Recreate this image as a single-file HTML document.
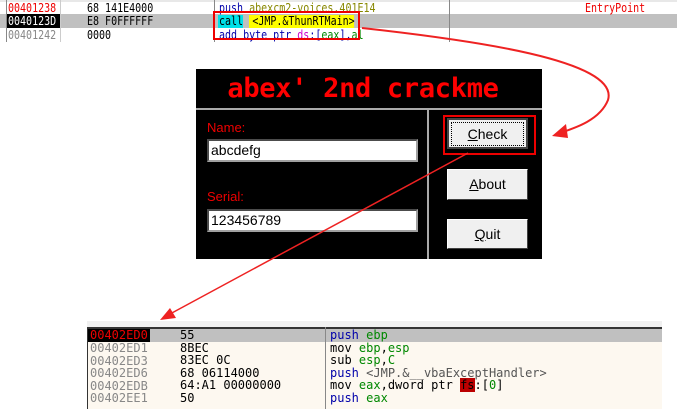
<!DOCTYPE html>
<html><head><meta charset="utf-8"><style>
body{margin:0;width:677px;height:409px;background:#fff;position:relative;overflow:hidden;font-family:"DejaVu Sans Mono","Liberation Mono",monospace;font-size:12px}
.a{position:absolute;white-space:pre;line-height:13px}
.t{font-size:12.5px;line-height:14px;transform:scaleX(0.8);transform-origin:0 0}
.btn{position:absolute;background:#f0f0f0;border:1px solid #fff;border-right-color:#404040;border-bottom-color:#404040;box-shadow:1px 1px 0 #000;font-family:"Liberation Sans",sans-serif;font-size:14px;text-align:center;color:#000}
.inp{position:absolute;background:#fff;border:2px inset #a0a0a0;font-family:"Liberation Sans",sans-serif;font-size:14px;padding-left:2px;box-sizing:border-box;line-height:19px}
.lbl{position:absolute;color:#e00;font-family:"Liberation Sans",sans-serif;font-size:13px}
</style></head><body>
<!-- top table -->
<div style="position:absolute;left:0;top:0;width:677px;height:2px;background:#e8e8e8"></div>
<div style="position:absolute;left:0;top:14px;width:677px;height:14px;background:#c0c0c0"></div>
<div style="position:absolute;left:6px;top:0;width:1px;height:42px;background:#888"></div>
<div style="position:absolute;left:60px;top:0;width:1px;height:42px;background:#ccc"></div>
<div style="position:absolute;left:214px;top:0;width:1px;height:42px;background:#888"></div>
<div style="position:absolute;left:449px;top:0;width:1px;height:42px;background:#888"></div>
<div style="position:absolute;left:7px;top:14px;width:53px;height:14px;background:#000"></div>
<div style="position:absolute;left:218px;top:15px;width:25px;height:13px;background:#00e0e8"></div>
<div style="position:absolute;left:249px;top:15px;width:105px;height:13px;background:#ffff00"></div>
<div class="a t" style="left:8px;top:1px;color:#e00">00401238</div>
<div class="a t" style="left:8px;top:14px;color:#fff">0040123D</div>
<div class="a t" style="left:8px;top:28px;color:#888">00401242</div>
<div class="a t" style="left:87px;top:1px">68 141E4000</div>
<div class="a t" style="left:87px;top:14px">E8 F0FFFFFF</div>
<div class="a t" style="left:87px;top:28px">0000</div>
<div class="a t" style="left:219px;top:1px;color:#00a"><span>push</span> <span style="color:#880">abexcm2-voices.401E14</span></div>
<div class="a t" style="left:219px;top:14px;color:#000">call <span style="position:relative;left:4px">&lt;JMP.&amp;ThunRTMain&gt;</span></div>
<div class="a t" style="left:219px;top:28px;color:#00a">add byte ptr <span style="color:#c0c">ds</span>:[<span style="color:#080">eax</span>],<span style="color:#080">al</span></div>
<div class="a t" style="left:585px;top:1px;color:#e00">EntryPoint</div>
<div style="position:absolute;left:213px;top:11px;width:143px;height:25px;border:2px solid #e00"></div>
<!-- dialog -->
<div style="position:absolute;left:196px;top:69px;width:346px;height:190px;background:#000"></div>
<div class="a" style="left:190px;top:76px;width:346px;text-align:center;color:#f00;font-size:27px;line-height:26px;font-weight:bold;font-family:'DejaVu Sans Mono',monospace;letter-spacing:-0.3px">abex' 2nd crackme</div>
<div style="position:absolute;left:196px;top:108px;width:346px;height:2px;background:#aaa"></div>
<div style="position:absolute;left:427px;top:110px;width:2px;height:149px;background:#aaa"></div>
<div class="lbl" style="left:207px;top:120px">Name:</div>
<div class="inp" style="left:207px;top:139px;width:211px;height:23px">abcdefg</div>
<div class="lbl" style="left:207px;top:189px">Serial:</div>
<div class="inp" style="left:207px;top:209px;width:211px;height:23px">123456789</div>
<div class="btn" style="left:447px;top:118px;line-height:28px;border:2px solid #444;box-shadow:none;box-sizing:border-box;width:81px;height:31px"><span style="outline:1px dotted #000;padding:3px 16px"><u>C</u>heck</span></div>
<div class="btn" style="left:447px;top:169px;width:79px;height:29px;line-height:29px"><u>A</u>bout</div>
<div class="btn" style="left:447px;top:219px;width:79px;height:28px;line-height:28px"><u>Q</u>uit</div>
<div style="position:absolute;left:443px;top:115px;width:89px;height:36px;border:2px solid #e00"></div>
<!-- bottom table -->
<div style="position:absolute;left:87px;top:321px;width:575px;height:6px;background:#f0f0f0"></div>
<div style="position:absolute;left:87px;top:327px;width:575px;height:82px;background:#fdf8f0"></div>
<div style="position:absolute;left:87px;top:327px;width:575px;height:2px;background:#333"></div>
<div style="position:absolute;left:87px;top:329px;width:575px;height:13px;background:#c0c0c0"></div>
<div style="position:absolute;left:87px;top:327px;width:1px;height:82px;background:#333"></div>
<div style="position:absolute;left:88px;top:329px;width:62px;height:13px;background:#000"></div>
<div style="position:absolute;left:325px;top:327px;width:1px;height:82px;background:#888"></div>
<div class="a" style="left:90px;top:329px;color:#e00;line-height:12.5px">00402ED0</div>
<div class="a" style="left:90px;top:342px;color:#888;line-height:12.5px">00402ED1
00402ED3
00402ED6
00402EDB
00402EE1</div>
<div class="a" style="left:180px;top:329px;line-height:12.5px">55
8BEC
83EC 0C
68 06114000
64:A1 00000000
50</div>
<div class="a" style="left:330px;top:329px;line-height:12.5px"><span style="color:#00a">push</span> <span style="color:#080">ebp</span>
mov <span style="color:#080">ebp</span>,<span style="color:#080">esp</span>
sub <span style="color:#080">esp</span>,<span style="color:#080">C</span>
<span style="color:#00a">push</span> <span style="color:#555">&lt;JMP.&amp;__vbaExceptHandler&gt;</span>
mov <span style="color:#080">eax</span>,dword ptr <span style="background:#b00">fs</span>:[<span style="color:#080">0</span>]
<span style="color:#00a">push</span> <span style="color:#080">eax</span></div>
<!-- arrows -->
<svg style="position:absolute;left:0;top:0" width="677" height="409">
<path d="M362 28 C 470 40, 620 60, 608 100 C 600 120, 575 128, 560 133" fill="none" stroke="#e22" stroke-width="2"/>
<polygon points="552,136 566,124 568,138" fill="#e22"/>
<line x1="468" y1="153" x2="170" y2="314" stroke="#e22" stroke-width="1.5"/>
<polygon points="160,320 170,308 176,318" fill="#e22"/>
</svg>
</body></html>
